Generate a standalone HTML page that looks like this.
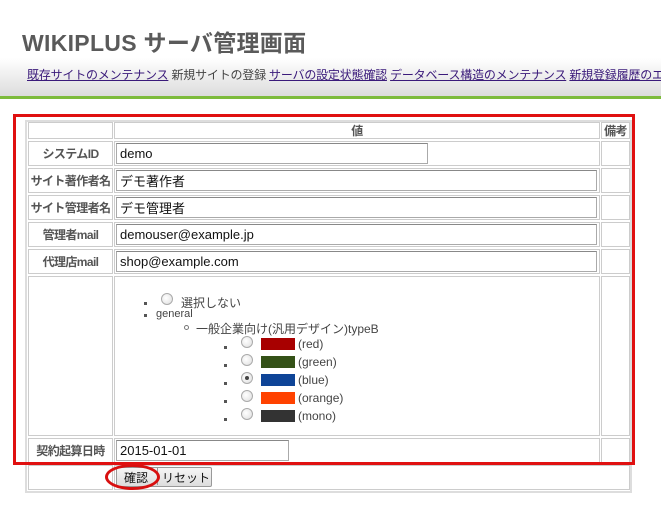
<!DOCTYPE html>
<html><head><meta charset="utf-8"><style>
body{margin:0;width:661px;height:516px;background:#fff;position:relative;overflow:hidden;font-family:"Liberation Sans","Noto Sans CJK JP",sans-serif;}
.a{position:absolute;}
.c{position:absolute;border:1px solid #ccc;box-sizing:border-box;}
.lbl{position:absolute;box-sizing:border-box;border:1px solid #ccc;font-size:12px;font-weight:bold;color:#555;text-align:center;display:flex;align-items:center;justify-content:center;white-space:nowrap;overflow:hidden;letter-spacing:-0.6px;}
.in{position:absolute;box-sizing:border-box;border:1px solid #aaa;border-top-color:#888;background:#fff;font-size:13px;color:#111;padding-left:3px;display:flex;align-items:center;height:21px;}
.rd{position:absolute;width:12px;height:12px;border-radius:50%;box-sizing:border-box;border:1px solid #aaa;background:radial-gradient(circle at 40% 40%,#fff,#ddd);}
.sw{position:absolute;width:34px;height:12px;}
.t{position:absolute;font-size:11px;color:#444;}
.b{position:absolute;width:3px;height:3px;background:#555;}
</style></head><body>
<div class="a" style="left:0;top:58px;width:661px;height:38px;background:linear-gradient(#fff,#dcdcdc)"></div>
<div class="a" style="left:0;top:96px;width:661px;height:3px;background:#7dbb3c"></div>
<div class="a" style="left:22px;top:24px;font-size:23px;font-weight:bold;color:#5a5a5a;white-space:nowrap;letter-spacing:0.3px">WIKIPLUS サーバ管理画面</div>
<div class="a" style="left:27px;top:66px;width:634px;overflow:hidden;font-size:12px;white-space:nowrap;color:#444;letter-spacing:-0.2px"><u style="color:#3a1a7a">既存サイトのメンテナンス</u> 新規サイトの登録 <u style="color:#3a1a7a">サーバの設定状態確認</u> <u style="color:#3a1a7a">データベース構造のメンテナンス</u> <u style="color:#3a1a7a">新規登録履歴のエクスポート</u></div>

<div class="c" style="left:25px;top:120px;width:607px;height:373px;border:2px solid #ddd"></div>
<div class="c" style="left:28px;top:122px;width:85px;height:17px"></div>
<div class="lbl" style="left:114px;top:122px;width:486px;height:17px">値</div>
<div class="lbl" style="left:601px;top:122px;width:29px;height:17px">備考</div>

<div class="lbl" style="left:28px;top:141px;width:85px;height:25px">システムID</div>
<div class="c" style="left:114px;top:141px;width:486px;height:25px"></div>
<div class="c" style="left:601px;top:141px;width:29px;height:25px"></div>
<div class="in" style="left:116px;top:143px;width:312px">demo</div>

<div class="lbl" style="left:28px;top:168px;width:85px;height:25px">サイト著作者名</div>
<div class="c" style="left:114px;top:168px;width:486px;height:25px"></div>
<div class="c" style="left:601px;top:168px;width:29px;height:25px"></div>
<div class="in" style="left:116px;top:170px;width:481px">デモ著作者</div>

<div class="lbl" style="left:28px;top:195px;width:85px;height:25px">サイト管理者名</div>
<div class="c" style="left:114px;top:195px;width:486px;height:25px"></div>
<div class="c" style="left:601px;top:195px;width:29px;height:25px"></div>
<div class="in" style="left:116px;top:197px;width:481px">デモ管理者</div>

<div class="lbl" style="left:28px;top:222px;width:85px;height:25px">管理者mail</div>
<div class="c" style="left:114px;top:222px;width:486px;height:25px"></div>
<div class="c" style="left:601px;top:222px;width:29px;height:25px"></div>
<div class="in" style="left:116px;top:224px;width:481px">demouser@example.jp</div>

<div class="lbl" style="left:28px;top:249px;width:85px;height:25px">代理店mail</div>
<div class="c" style="left:114px;top:249px;width:486px;height:25px"></div>
<div class="c" style="left:601px;top:249px;width:29px;height:25px"></div>
<div class="in" style="left:116px;top:251px;width:481px">shop@example.com</div>

<div class="c" style="left:28px;top:276px;width:85px;height:160px"></div>
<div class="c" style="left:114px;top:276px;width:486px;height:160px"></div>
<div class="c" style="left:601px;top:276px;width:29px;height:160px"></div>
<div class="b" style="left:144px;top:302px"></div>
<div class="rd" style="left:161px;top:293px"></div>
<div class="t" style="left:181px;top:294px;font-size:12px">選択しない</div>
<div class="b" style="left:144px;top:314px"></div>
<div class="t" style="left:156px;top:308px">general</div>
<div class="a" style="left:184px;top:325px;width:3px;height:3px;border:1px solid #777;border-radius:50%"></div>
<div class="t" style="left:196px;top:320px;font-size:12px">一般企業向け(汎用デザイン)typeB</div>
<div class="b" style="left:224px;top:346px"></div><div class="rd" style="left:241px;top:336px"></div><div class="sw" style="left:261px;top:338px;background:#a80000"></div><div class="t" style="left:298px;top:337px;font-size:12px">(red)</div>
<div class="b" style="left:224px;top:364px"></div><div class="rd" style="left:241px;top:354px"></div><div class="sw" style="left:261px;top:356px;background:#345117"></div><div class="t" style="left:298px;top:355px;font-size:12px">(green)</div>
<div class="b" style="left:224px;top:382px"></div><div class="rd" style="left:241px;top:372px"></div><div class="a" style="left:245px;top:376px;width:4px;height:4px;border-radius:50%;background:#444"></div><div class="sw" style="left:261px;top:374px;background:#0e4497"></div><div class="t" style="left:298px;top:373px;font-size:12px">(blue)</div>
<div class="b" style="left:224px;top:400px"></div><div class="rd" style="left:241px;top:390px"></div><div class="sw" style="left:261px;top:392px;background:#ff4200"></div><div class="t" style="left:298px;top:391px;font-size:12px">(orange)</div>
<div class="b" style="left:224px;top:418px"></div><div class="rd" style="left:241px;top:408px"></div><div class="sw" style="left:261px;top:410px;background:#333"></div><div class="t" style="left:298px;top:409px;font-size:12px">(mono)</div>

<div class="lbl" style="left:28px;top:438px;width:85px;height:25px">契約起算日時</div>
<div class="c" style="left:114px;top:438px;width:486px;height:25px"></div>
<div class="c" style="left:601px;top:438px;width:29px;height:25px"></div>
<div class="in" style="left:116px;top:440px;width:173px">2015-01-01</div>

<div class="c" style="left:28px;top:465px;width:85px;height:25px"></div>
<div class="c" style="left:114px;top:465px;width:516px;height:25px"></div>
<div class="a" style="left:116px;top:467px;width:96px;height:20px;box-sizing:border-box;border:1px solid #999;border-radius:2px;background:linear-gradient(#f6f6f6,#ddd)"></div>
<div class="a" style="left:157px;top:468px;width:1px;height:17px;background:#999"></div>
<div class="a" style="left:124px;top:469px;font-size:12px;color:#111">確認</div>
<div class="a" style="left:162px;top:469px;font-size:12px;color:#111">リセット</div>
<div class="a" style="left:105px;top:464px;width:55px;height:26px;box-sizing:border-box;border:3px solid #d81010;border-radius:50%"></div>

<div class="a" style="left:13px;top:114px;width:622px;height:351px;box-sizing:border-box;border:3px solid #e01010"></div>
</body></html>
